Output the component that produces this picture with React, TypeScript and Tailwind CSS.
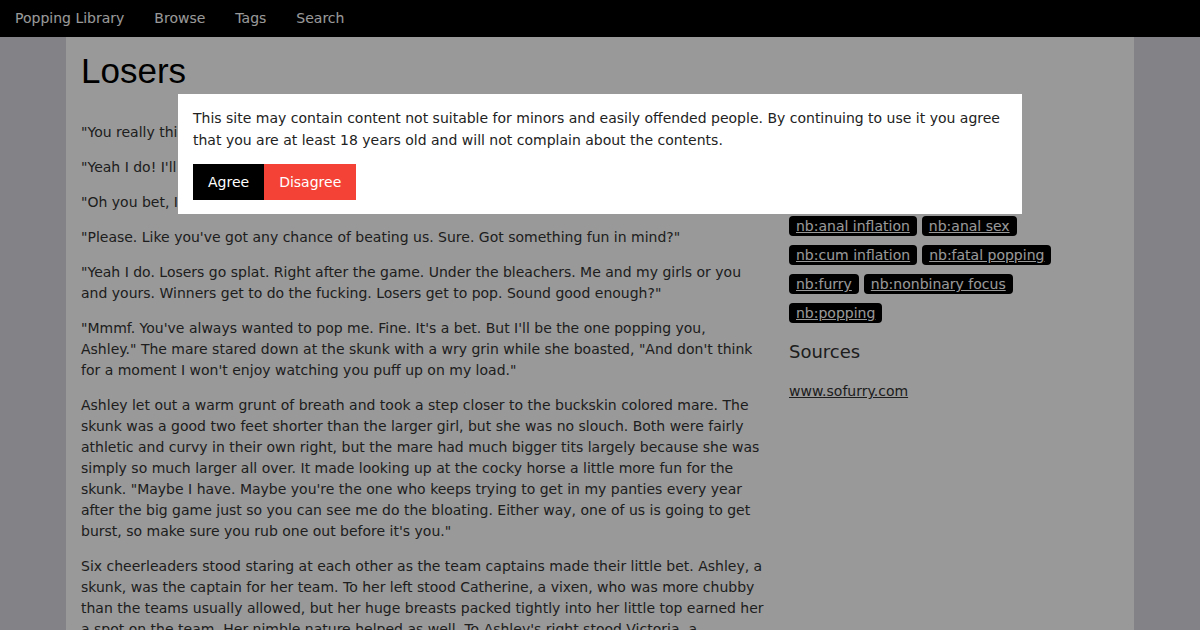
import React from "react";

const paragraphs = [
  "\"You really think your team stands a chance against mine this year?\"",
  "\"Yeah I do! I'll even put something on it if you want.\"",
  "\"Oh you bet, I want. Name it and we'll see who comes out on top.\"",
  "\"Please. Like you've got any chance of beating us. Sure. Got something fun in mind?\"",
  "\"Yeah I do. Losers go splat. Right after the game. Under the bleachers. Me and my girls or you and yours. Winners get to do the fucking. Losers get to pop. Sound good enough?\"",
  "\"Mmmf. You've always wanted to pop me. Fine. It's a bet. But I'll be the one popping you, Ashley.\" The mare stared down at the skunk with a wry grin while she boasted, \"And don't think for a moment I won't enjoy watching you puff up on my load.\"",
  "Ashley let out a warm grunt of breath and took a step closer to the buckskin colored mare. The skunk was a good two feet shorter than the larger girl, but she was no slouch. Both were fairly athletic and curvy in their own right, but the mare had much bigger tits largely because she was simply so much larger all over. It made looking up at the cocky horse a little more fun for the skunk. \"Maybe I have. Maybe you're the one who keeps trying to get in my panties every year after the big game just so you can see me do the bloating. Either way, one of us is going to get burst, so make sure you rub one out before it's you.\"",
  "Six cheerleaders stood staring at each other as the team captains made their little bet. Ashley, a skunk, was the captain for her team. To her left stood Catherine, a vixen, who was more chubby than the teams usually allowed, but her huge breasts packed tightly into her little top earned her a spot on the team. Her nimble nature helped as well. To Ashley's right stood Victoria, a",
];

const tags = [
  "nb:anal inflation",
  "nb:anal sex",
  "nb:cum inflation",
  "nb:fatal popping",
  "nb:furry",
  "nb:nonbinary focus",
  "nb:popping",
];

function Tag({ label }: { label: string }) {
  return (
    <a href="#" className="inline-block h-[20px] rounded-[4px] bg-black px-[7px] leading-[20px] text-white underline">
      {label}
    </a>
  );
}

export default function App() {
  return (
    <div
      className="relative min-h-screen overflow-hidden bg-[#dadae1] text-[14px] leading-[21px] text-[#333]"
      style={{ fontFamily: "'DejaVu Sans', Verdana, sans-serif" }}
    >
      <nav className="flex h-[37px] items-center bg-black text-white">
        <a href="#" className="px-[15px] py-2">Popping Library</a>
        <a href="#" className="px-[15px] py-2">Browse</a>
        <a href="#" className="px-[15px] py-2">Tags</a>
        <a href="#" className="px-[15px] py-2">Search</a>
      </nav>

      <main className="mx-auto min-h-[593px] w-[1068px] bg-white px-[15px]">
        <h1 className="pt-[14px] text-[35px] leading-[40px] text-black" style={{ fontFamily: "'Liberation Sans', Arial, sans-serif" }}>
          Losers
        </h1>

        <div className="mt-[31px] grid grid-cols-[683.5px_1fr] gap-x-[24.5px]">
          <div>
            {paragraphs.map((p, i) => (
              <p key={i} className="mb-[14px]">{p}</p>
            ))}
          </div>

          <aside className="pt-[51px] pr-[30px]">
            <h3 className="mb-[16px] text-[18px] leading-[27px]">Tags</h3>
            <div className="flex flex-wrap gap-x-[5px] gap-y-[9px]">
              {tags.map((t) => (
                <Tag key={t} label={t} />
              ))}
            </div>
            <h3 className="mt-[15px] mb-[16px] text-[18px] leading-[27px]">Sources</h3>
            <a href="#" className="underline">www.sofurry.com</a>
          </aside>
        </div>
      </main>

      {/* age gate */}
      <div className="absolute inset-0 bg-black/40 pt-[94px]">
        <div className="mx-auto w-[844px] bg-white px-[15px] pt-[13px] pb-[14px] text-[#222]">
          <p className="leading-[22px]">
            This site may contain content not suitable for minors and easily offended people. By continuing to use it you agree that you are at least 18 years old and will not complain about the contents.
          </p>
          <div className="mt-[13px] flex">
            <button className="h-[36px] bg-black px-[15px] text-white">Agree</button>
            <button className="h-[36px] bg-[#f44336] px-[15px] text-white">Disagree</button>
          </div>
        </div>
      </div>
    </div>
  );
}
